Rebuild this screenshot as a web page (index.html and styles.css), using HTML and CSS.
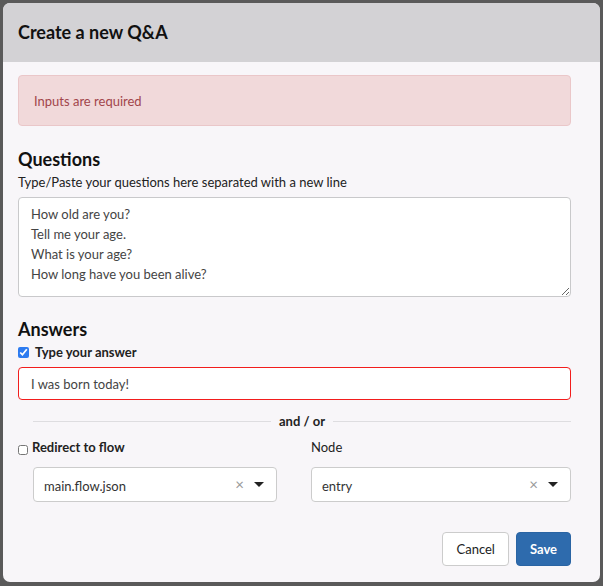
FILE: index.html
```html
<!DOCTYPE html>
<html lang="en">
<head>
<meta charset="utf-8">
<title>Create a new Q&amp;A</title>
<link rel="stylesheet" href="styles.css">
</head>
<body>
<div class="modal">
  <div class="modal-header">
    <h4 class="modal-title">Create a new Q&amp;A</h4>
  </div>
  <div class="modal-body">
    <div class="alert">Inputs are required</div>

    <h3 class="section-title">Questions</h3>
    <p class="hint">Type/Paste your questions here separated with a new line</p>
    <textarea class="field questions" rows="4">How old are you?
Tell me your age.
What is your age?
How long have you been alive?</textarea>

    <h3 class="section-title answers-title">Answers</h3>
    <label class="check-label">
      <input type="checkbox" checked>
      <span>Type your answer</span>
    </label>
    <input class="field answer invalid" type="text" value="I was born today!">

    <div class="divider"><span>and / or</span></div>

    <div class="redirect">
      <div class="redirect-col flow-col">
        <label class="check-label redirect-check">
          <input type="checkbox">
          <span>Redirect to flow</span>
        </label>
        <div class="select flow-select">
          <span class="select-value">main.flow.json</span>
          <span class="select-clear">×</span>
          <span class="select-caret"></span>
        </div>
      </div>
      <div class="redirect-col node-col">
        <div class="node-label">Node</div>
        <div class="select">
          <span class="select-value">entry</span>
          <span class="select-clear">×</span>
          <span class="select-caret"></span>
        </div>
      </div>
    </div>
  </div>
  <div class="modal-footer">
    <button class="btn btn-default">Cancel</button>
    <button class="btn btn-primary">Save</button>
  </div>
</div>
</body>
</html>
```

FILE: styles.css
```css
* {
  box-sizing: border-box;
}

html, body {
  margin: 0;
  height: 100%;
}

body {
  background: #5a5a5a;
  font-family: Lato, "Open Sans", Arial, sans-serif;
  color: #222;
  padding: 3px;
}

.modal {
  width: 597px;
  height: 579px;
  background: #f8f6f9;
  border-radius: 7px;
  overflow: hidden;
  display: flex;
  flex-direction: column;
}

.modal-header {
  background: #d3d2d5;
  height: 59px;
  display: flex;
  align-items: center;
  padding: 0 15px;
  flex: none;
}

.modal-title {
  margin: 0;
  font-size: 18px;
  font-weight: 700;
  color: #111;
  padding-bottom: 1px;
}

.modal-body {
  padding: 13px 29px 0 15px;
  flex: 1;
}

.alert {
  height: 51px;
  background: #f1d9da;
  border: 1px solid #eac7c9;
  border-radius: 4px;
  color: #a2454b;
  font-size: 13px;
  padding: 0 15px;
  display: flex;
  align-items: center;
}

.section-title {
  margin: 22px 0 0;
  font-size: 18px;
  font-weight: 700;
  line-height: 22px;
  color: #111;
}

.answers-title {
  margin-top: 21px;
}

.hint {
  margin: 3px 0 0;
  font-size: 13px;
  line-height: 18px;
  color: #222;
}

.field {
  display: block;
  width: 100%;
  background: #fff;
  border: 1px solid #c9c9cb;
  border-radius: 4px;
  font-family: inherit;
  font-size: 13px;
  color: #444;
}

.questions {
  margin-top: 6px;
  height: 100px;
  padding: 6px 12px;
  line-height: 20px;
  resize: vertical;
}

.check-label {
  display: flex;
  align-items: center;
  font-size: 13px;
  font-weight: 700;
  color: #222;
  margin-top: 4px;
}

.check-label input {
  margin: 0 6px 0 0;
  width: 11px;
  height: 11px;
  accent-color: #2d7bf0;
}

.answer {
  margin-top: 7px;
  height: 33px;
  padding: 0 12px;
}

.answer.invalid {
  border-color: #f21d1d;
}

.divider {
  display: flex;
  align-items: center;
  margin: 13px 0 0 15px;
  font-size: 13px;
  font-weight: 700;
  color: #222;
  gap: 8px;
}

.divider::before,
.divider::after {
  content: "";
  flex: 1;
  height: 1px;
  background: #dedde0;
}

.redirect {
  display: flex;
  gap: 34px;
  margin-top: 6px;
}

.redirect-col {
  display: flex;
  flex-direction: column;
}

.flow-col {
  width: 259px;
}

.node-col {
  flex: 1;
}

.redirect-check {
  margin-top: 0;
  align-items: flex-end;
  height: 20px;
}

.redirect-check input {
  margin-right: 4px;
  margin-bottom: 0;
  width: 10px;
  height: 10px;
}

.node-label {
  font-size: 13px;
  height: 20px;
  display: flex;
  align-items: flex-end;
  color: #222;
}

.select {
  margin-top: 12px;
  height: 35px;
  background: #fff;
  border: 1px solid #ccc;
  border-radius: 4px;
  display: flex;
  align-items: center;
  padding: 0 12px 0 10px;
  font-size: 13px;
  color: #333;
}

.flow-select {
  margin-left: 15px;
}

.select-value {
  flex: 1;
  padding-top: 2px;
}

.select-clear {
  color: #999;
  font-size: 15px;
  margin-right: 10px;
  line-height: 1;
}

.select-caret {
  width: 0;
  height: 0;
  border-left: 5px solid transparent;
  border-right: 5px solid transparent;
  border-top: 5px solid #222;
}

.modal-footer {
  flex: none;
  display: flex;
  justify-content: flex-end;
  gap: 7px;
  padding: 0 29px 16px 0;
}

.btn {
  height: 34px;
  border-radius: 4px;
  font-family: inherit;
  font-size: 13px;
  padding: 0 13px;
  cursor: pointer;
}

.btn-default {
  background: #fff;
  border: 1px solid #ccc;
  color: #222;
}

.btn-primary {
  background: #2e6bad;
  border: 1px solid #2a64a3;
  color: #fff;
  font-weight: 700;
}
```
